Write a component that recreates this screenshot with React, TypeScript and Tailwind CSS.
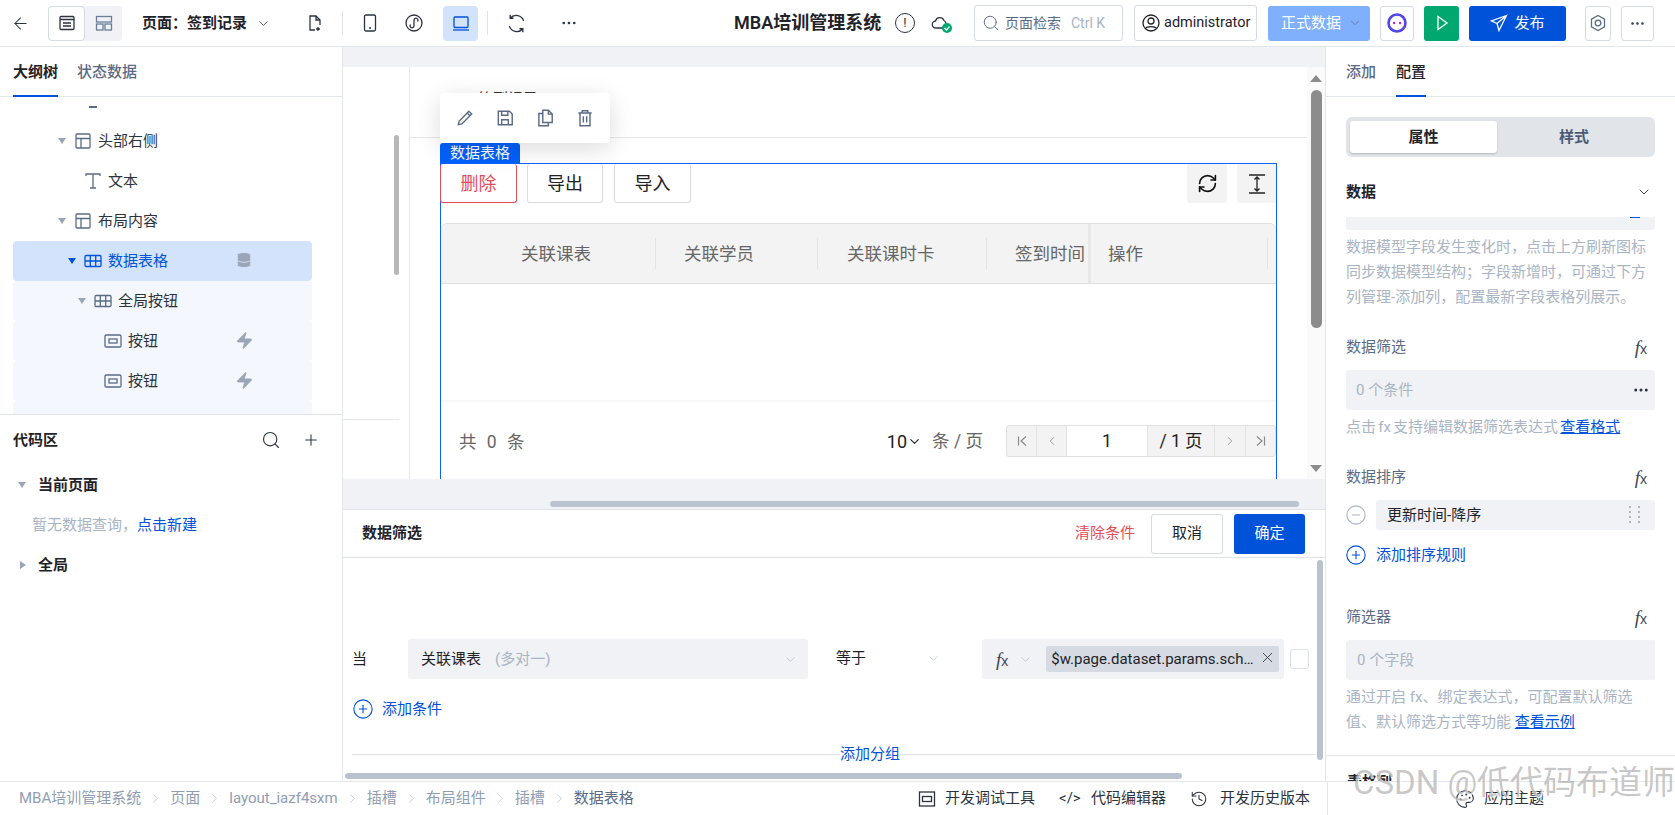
import {
  ArrowLeft,
  ChevronDown,
  ChevronRight,
  ChevronLeft,
  CircleMinus,
  CirclePlus,
  Ellipsis,
  Database,
  History,
  Palette,
  Plus,
  Search,
  X,
  Zap,
  RefreshCw,
} from "lucide-react";

const FONT = "font-['Roboto','Noto_Sans_CJK_SC',sans-serif]";

const Svg = ({ children, size = 18, className = "" }: { children: React.ReactNode; size?: number; className?: string }) => (
  <svg width={size} height={size} viewBox="0 0 18 18" fill="none" stroke="currentColor" strokeWidth="1.3" className={className}>
    {children}
  </svg>
);

const Fx = () => (
  <span className="font-['Liberation_Serif',serif] italic text-[19px] leading-none text-[#3c4657]">
    f<span className="text-[14px] not-italic font-['Liberation_Sans',sans-serif]">x</span>
  </span>
);

const Caret = ({ blue = false }: { blue?: boolean }) => (
  <span className={`w-0 h-0 border-x-[4px] border-x-transparent border-t-[6px] ${blue ? "border-t-[#0052d9]" : "border-t-[#9aa6b8]"}`} />
);

const LayoutIcon = () => (
  <Svg className="text-[#5b6b85]">
    <rect x="2" y="2" width="14" height="14" rx="1" />
    <path d="M2 6.5h14M7 6.5V16" />
  </Svg>
);

const TableIcon = ({ blue = false }: { blue?: boolean }) => (
  <Svg className={blue ? "text-[#0052d9]" : "text-[#5b6b85]"}>
    <rect x="1" y="3.5" width="16" height="11" rx="1.2" />
    <path d="M1 9h16M6.3 3.5v11M11.7 3.5v11" />
  </Svg>
);

const ButtonIcon = () => (
  <Svg className="text-[#5b6b85]">
    <rect x="1" y="3" width="16" height="12" rx="1.2" />
    <rect x="5" y="7" width="8" height="4" />
  </Svg>
);

type TreeRowProps = {
  pad: string;
  caret?: boolean;
  blue?: boolean;
  bg?: string;
  icon: React.ReactNode;
  label: string;
  side?: React.ReactNode;
};

const TreeRow = ({ pad, caret, blue, bg = "", icon, label, side }: TreeRowProps) => (
  <div className={`flex items-center h-10 shrink-0 rounded-[4px] relative ${pad} ${bg}`}>
    {caret && (
      <span className="w-[16px] flex items-center">
        <Caret blue={blue} />
      </span>
    )}
    {icon}
    <span className={`ml-[6px] text-[15px] ${blue ? "text-[#0052d9]" : "text-[#2b3340]"}`}>{label}</span>
    {side && <span className="absolute left-[222px] top-[10px]">{side}</span>}
  </div>
);

const Bolt = () => <Zap size={19} fill="#9aa6b8" stroke="#9aa6b8" strokeWidth={1} />;

const LeftPanel = () => (
  <aside className="w-[343px] shrink-0 border-r border-[#e3e6eb] flex flex-col">
    <div className="h-[50px] shrink-0 border-b border-[#e3e6eb] flex items-stretch pl-[13px] text-[15px]">
      <div className="w-[45px] pt-[2px] flex items-center font-semibold text-[#1f2329] border-b-2 border-[#0052d9] -mb-px">大纲树</div>
      <div className="ml-[19px] pt-[2px] flex items-center font-medium text-[#5b6b85]">状态数据</div>
    </div>
    <div className="h-[317px] shrink-0 overflow-hidden pl-[13px] pr-[30px] flex flex-col">
      <div className="h-[24px] shrink-0 pl-[76px] pt-[9px]">
        <div className="w-[8px] h-[2px] bg-[#5b6b85]" />
      </div>
      <TreeRow pad="pl-[45px]" caret icon={<LayoutIcon />} label="头部右侧" />
      <TreeRow
        pad="pl-[71px]"
        icon={
          <svg width="18" height="18" viewBox="0 0 18 18" fill="none" stroke="#5b6b85" strokeWidth="1.3">
            <path d="M2 4V2h14v2M9 2v14M6 16h6" />
          </svg>
        }
        label="文本"
      />
      <TreeRow pad="pl-[45px]" caret icon={<LayoutIcon />} label="布局内容" />
      <TreeRow
        pad="pl-[55px]"
        caret
        blue
        bg="bg-[#d2e3fb]"
        icon={<TableIcon blue />}
        label="数据表格"
        side={<Database size={18} fill="#9aa6b8" stroke="#d2e3fb" strokeWidth={1.2} />}
      />
      <TreeRow pad="pl-[65px]" caret bg="bg-[#f4f7fe]" icon={<TableIcon />} label="全局按钮" />
      <TreeRow pad="pl-[91px]" bg="bg-[#f4f7fe]" icon={<ButtonIcon />} label="按钮" side={<Bolt />} />
      <TreeRow pad="pl-[91px]" bg="bg-[#f4f7fe]" icon={<ButtonIcon />} label="按钮" side={<Bolt />} />
      <div className="h-10 shrink-0 bg-[#f4f7fe] rounded-[4px]" />
    </div>
    <div className="border-t border-[#dfe3e9] flex-1">
      <div className="h-[50px] flex items-center pl-[13px] pr-[22px]">
        <span className="text-[15px] font-semibold text-[#1f2329]">代码区</span>
        <Search size={20} strokeWidth={1.4} className="ml-auto text-[#2b3340]" />
        <Plus size={18} strokeWidth={1.4} className="ml-[21px] text-[#2b3340]" />
      </div>
      <div className="h-[40px] flex items-center pl-[18px] text-[15px] font-semibold text-[#1f2329]">
        <span className="w-[20px] flex"><Caret /></span>
        当前页面
      </div>
      <div className="h-[40px] flex items-center pl-[32px] text-[15px] text-[#a9b4c4]">
        暂无数据查询，<span className="text-[#0052d9]">点击新建</span>
      </div>
      <div className="h-[40px] flex items-center pl-[20px] text-[15px] font-semibold text-[#1f2329]">
        <span className="w-[18px] flex">
          <span className="w-0 h-0 border-y-[4px] border-y-transparent border-l-[6px] border-l-[#9aa6b8]" />
        </span>
        全局
      </div>
    </div>
  </aside>
);

const TH = ({ width, pad, label, divider = true, extra = "" }: { width: string; pad: string; label: string; divider?: boolean; extra?: string }) => (
  <div className={`flex items-center justify-between ${width} ${pad} ${extra}`}>
    <span className="mt-[2px]">{label}</span>
    {divider && <span className="w-px h-[31px] bg-[#e3e3e3]" />}
  </div>
);

const PageCell = ({ children, width, white = false }: { children: React.ReactNode; width: string; white?: boolean }) => (
  <div className={`flex items-center justify-center h-full border-r border-[#e3e3e3] last:border-r-0 ${width} ${white ? "bg-white" : ""}`}>
    {children}
  </div>
);

const Canvas = () => (
  <div className="h-[462px] shrink-0 bg-[#f0f2f5] relative">
    <div className="h-[20px]" />
    <div className="h-[412px] bg-white flex overflow-hidden">
      <div className="w-[67px] shrink-0 border-r border-[#e3e6eb] relative">
        <div className="absolute left-[51px] top-[68px] w-[5px] h-[140px] rounded-full bg-[#b8b8b8]" />
        <div className="absolute left-0 top-[352px] w-[56px] h-px bg-[#e3e6eb]" />
      </div>
      <div className="w-[897px] shrink-0 relative overflow-hidden">
        <div className="h-[71px] border-b border-[#e6e6e6] pl-[68px] pt-[21px] text-[15px] text-[#333]">签到记录</div>
        <div className="ml-[30px] mt-[5px] w-[80px] h-[20px] rounded-t-[3px] bg-[#0061fb] text-white text-[15px] flex items-center justify-center">数据表格</div>
        <div className="ml-[30px] w-[837px] h-[316px] border-x border-t border-[#0f62fe] flex flex-col">
          <div className="h-[39px] shrink-0 flex text-[18px] text-[#222]">
            <div className="-ml-px w-[77px] pt-[1px] border border-t-0 border-[#e34d59] rounded-[3px] flex items-center justify-center text-[#e34d59]">删除</div>
            <div className="ml-[10px] w-[76px] pt-[1px] border border-t-0 border-[#dcdcdc] rounded-[3px] flex items-center justify-center">导出</div>
            <div className="ml-[11px] w-[77px] pt-[1px] border border-t-0 border-[#dcdcdc] rounded-[3px] flex items-center justify-center">导入</div>
            <div className="ml-auto w-[40px] bg-[#f3f3f3] rounded-[3px] flex items-center justify-center">
              <RefreshCw size={21} strokeWidth={1.9} className="text-[#111]" />
            </div>
            <div className="ml-[10px] w-[39px] bg-[#f3f3f3] rounded-[3px] flex items-center justify-center">
              <svg width="20" height="22" viewBox="0 0 20 22" fill="none" stroke="#222" strokeWidth="1.3">
                <path d="M2 2h16M2 20h16M10 4v14M7.5 6.5 10 4l2.5 2.5M7.5 15.5 10 18l2.5-2.5" />
              </svg>
            </div>
          </div>
          <div className="mt-[20px] h-[61px] shrink-0 bg-[#f3f3f3] border-y border-[#e0e0e0] rounded-t-[6px] flex text-[17.5px] text-[#666]">
            <TH width="w-[215px]" pad="pl-[80px]" label="关联课表" />
            <TH width="w-[162px]" pad="pl-[28px]" label="关联学员" />
            <TH width="w-[169px]" pad="pl-[29px]" label="关联课时卡" />
            <TH width="w-[101px]" pad="pl-[28px]" label="签到时间" divider={false} />
            <TH width="flex-1" pad="pl-[17px] pr-[8px]" label="操作" extra="border-l-[3px] border-[#e8e8e8]" />
          </div>
          <div className="h-[116px] shrink-0" />
          <div className="h-[2px] shrink-0 bg-[#f7f7f7]" />
          <div className="flex-1 flex items-center pl-[18px] pt-[1px]">
            <span className="text-[17.5px] text-[#666] tracking-[3px] mt-[3px]">共 0 条</span>
            <span className="ml-auto text-[18px] text-[#222] flex items-center">
              10
              <ChevronDown size={15} strokeWidth={1.8} className="text-[#222]" />
            </span>
            <span className="ml-[10px] text-[17.5px] text-[#666]">条 / 页</span>
            <div className="ml-[23px] w-[270px] h-[32px] bg-[#f3f3f3] border border-[#e0e0e0] rounded-[3px] flex items-center text-[#8a8a8a]">
              <PageCell width="w-[30px]">
                <svg width="14" height="14" viewBox="0 0 14 14" fill="none" stroke="currentColor" strokeWidth="1.2"><path d="M3.5 2.5v9M11 2.5 6 7l5 4.5" /></svg>
              </PageCell>
              <PageCell width="w-[30px]"><ChevronLeft size={14} strokeWidth={1.4} /></PageCell>
              <PageCell width="w-[81px]" white><span className="text-[17.5px] text-[#222]">1</span></PageCell>
              <PageCell width="w-[67px]"><span className="text-[17.5px] text-[#222]">/ 1 页</span></PageCell>
              <PageCell width="w-[31px]"><ChevronRight size={14} strokeWidth={1.4} /></PageCell>
              <PageCell width="w-[29px]">
                <svg width="14" height="14" viewBox="0 0 14 14" fill="none" stroke="currentColor" strokeWidth="1.2"><path d="M10.5 2.5v9M3 2.5 8 7l-5 4.5" /></svg>
              </PageCell>
            </div>
          </div>
        </div>
        <div className="absolute left-[30px] top-[26px] w-[170px] h-[50px] bg-white rounded-[4px] shadow-[0_6px_24px_rgba(0,0,0,0.14)] flex items-center pl-[15px] gap-[20px] text-[#5b6b85]">
          <Svg size={20}><path d="m3 15 .8-3.2L12.5 3l2.5 2.5-8.8 8.8L3 15ZM11 4.5 13.5 7" /></Svg>
          <Svg size={20}><path d="M3 3h10l2.5 2.5V15H3V3ZM6 3v3.5h5.5V3M6 15v-4.5h6V15" /></Svg>
          <Svg size={20}><path d="M7 2h5l3.5 3.5V13H7V2ZM12 2v3.5h3.5M7 5H3.5v11H12v-3" /></Svg>
          <Svg size={20}><path d="M3 4.5h12M6.5 4.5V2.5h5v2M4.5 4.5V16h9V4.5M7.5 7.5v5.5M10.5 7.5v5.5" /></Svg>
        </div>
      </div>
      <div className="flex-1 bg-[#fafafa] relative">
        <div className="absolute left-[3px] top-[8px] w-0 h-0 border-x-[6px] border-x-transparent border-b-[7px] border-b-[#8c8c8c]" />
        <div className="absolute left-[4px] top-[23px] w-[11px] h-[238px] rounded-full bg-[#8c8c8c]" />
        <div className="absolute left-[3px] top-[398px] w-0 h-0 border-x-[6px] border-x-transparent border-t-[7px] border-t-[#8c8c8c]" />
      </div>
    </div>
    <div className="absolute left-[207px] top-[454px] w-[749px] h-[6px] rounded-full bg-[#b9c3d0]" />
  </div>
);

const BottomPanel = () => (
  <div className="h-[272px] shrink-0 border-t border-[#dfe3e9] flex flex-col">
    <div className="h-[48px] shrink-0 border-b border-[#dfe3e9] flex items-center pl-[19px] pr-[20px] text-[15px]">
      <span className="font-semibold text-[#1f2329]">数据筛选</span>
      <span className="ml-auto text-[#e34d59]">清除条件</span>
      <div className="ml-[16px] w-[72px] h-[40px] border border-[#d5dae3] rounded-[3px] flex items-center justify-center text-[#1f2329]">取消</div>
      <div className="ml-[11px] w-[71px] h-[40px] bg-[#0052d9] rounded-[3px] flex items-center justify-center text-white">确定</div>
    </div>
    <div className="flex-1 relative overflow-hidden pl-[9px] pt-[81px]">
      <div className="flex items-center text-[15px] text-[#1f2329]">
        <span className="w-[56px]">当</span>
        <div className="w-[400px] h-[40px] bg-[#f0f2f5] rounded-[3px] flex items-center pl-[13px] pr-[10px]">
          关联课表
          <span className="ml-[14px] text-[#a9b4c4]">(多对一)</span>
          <ChevronDown size={15} strokeWidth={1.2} className="ml-auto text-[#b6bfcc]" />
        </div>
        <div className="w-[174px] flex items-center pl-[28px] -mt-[2px]">
          等于
          <ChevronDown size={15} strokeWidth={1.2} className="ml-[60px] text-[#b6bfcc]" />
        </div>
        <div className="w-[302px] h-[40px] bg-[#f0f2f5] rounded-[3px] flex items-center pl-[14px]">
          <Fx />
          <ChevronDown size={15} strokeWidth={1.2} className="ml-[10px] text-[#b6bfcc]" />
          <div className="ml-[13px] w-[233px] h-[26px] bg-[#d5dae3] rounded-[2px] flex items-center pl-[5px] text-[#1f2329]">
            <span className="w-[203px] truncate">$w.page.dataset.params.sch...</span>
            <X size={17} strokeWidth={1.2} className="ml-[5px] -mt-[3px] text-[#2b3340]" />
          </div>
        </div>
        <div className="ml-[6px] w-[19px] h-[20px] border border-[#dcdfe6] rounded-[3px]" />
      </div>
      <div className="mt-[20px] h-[20px] flex items-center text-[15px] text-[#0052d9]">
        <CirclePlus size={22} strokeWidth={1.2} />
        <span className="ml-[8px]">添加条件</span>
      </div>
      <div className="mt-[25px] h-[20px] flex items-center pr-[10px] text-[15px] text-[#0052d9]">
        <div className="w-[488px] h-px bg-[#dfe3e9]" />
        <span>添加分组</span>
        <div className="flex-1 h-px bg-[#dfe3e9]" />
      </div>
      <div className="absolute right-[2px] top-[2px] w-[6px] h-[200px] rounded-full bg-[#b9c3d0]" />
      <div className="absolute left-[2px] bottom-[2px] w-[837px] h-[6px] rounded-full bg-[#b9c3d0]" />
    </div>
  </div>
);

const Help = ({ children }: { children: React.ReactNode }) => (
  <div className="mt-[5px] text-[15px] leading-[25px] text-[#a9b4c4]">{children}</div>
);

const FieldLabel = ({ label, mt }: { label: string; mt: string }) => (
  <div className={`h-[20px] flex items-center justify-between pr-[8px] text-[15px] text-[#5b6b85] ${mt}`}>
    {label}
    <Fx />
  </div>
);

const RightPanel = () => (
  <aside className="w-[350px] shrink-0 border-l border-[#e3e6eb] overflow-hidden flex flex-col">
    <div className="h-[50px] shrink-0 border-b border-[#e3e6eb] flex items-stretch pl-[20px] text-[15px]">
      <div className="pt-[2px] flex items-center font-medium text-[#5b6b85]">添加</div>
      <div className="ml-[20px] pt-[2px] flex items-center font-medium text-[#1f2329] border-b-2 border-[#0052d9] -mb-px">配置</div>
    </div>
    <div className="px-[20px] flex-1">
      <div className="mt-[20px] w-[309px] h-[40px] rounded-[6px] bg-[#e1e4e9] p-[4px] flex text-[15px] font-semibold">
        <div className="w-[147px] bg-white rounded-[3px] shadow-[0_1px_2px_rgba(0,0,0,0.2)] flex items-center justify-center text-[#1f2329]">属性</div>
        <div className="flex-1 flex items-center justify-center text-[#4b5b76]">样式</div>
      </div>
      <div className="mt-[24px] w-[309px] h-[22px] flex items-center justify-between pr-[3px] text-[15px] font-semibold text-[#1f2329]">
        数据
        <ChevronDown size={16} strokeWidth={1.3} />
      </div>
      <div className="mt-[14px] w-[309px] h-[13px] bg-[#f0f2f5] rounded-b-[3px] flex justify-end pr-[15px]">
        <div className="w-[10px] h-px bg-[#0052d9]" />
      </div>
      <Help>
        数据模型字段发生变化时，点击上方刷新图标
        <br />
        同步数据模型结构；字段新增时，可通过下方
        <br />
        列管理-添加列，配置最新字段表格列展示。
      </Help>
      <FieldLabel label="数据筛选" mt="mt-[27px]" />
      <div className="mt-[13px] w-[309px] h-[40px] bg-[#f0f2f5] rounded-[3px] flex items-center pl-[10px] pr-[5px] text-[15px] text-[#a9b4c4]">
        0 个条件
        <Ellipsis size={18} className="ml-auto text-[#2b3340]" />
      </div>
      <Help>
        <span className="[word-spacing:-1.5px]">点击 fx 支持编辑数据筛选表达式 </span>
        <span className="text-[#0052d9] underline">查看格式</span>
      </Help>
      <FieldLabel label="数据排序" mt="mt-[27px]" />
      <div className="mt-[13px] h-[30px] flex items-center">
        <CircleMinus size={22} strokeWidth={1.2} className="text-[#a9b4c4] -ml-[1px]" />
        <div className="ml-[9px] w-[279px] h-[30px] bg-[#f0f2f5] rounded-[3px] flex items-center pl-[11px] pr-[14px] text-[15px] text-[#1f2329]">
          更新时间-降序
          <svg width="13" height="18" viewBox="0 0 13 18" className="ml-auto" stroke="#6b7a90" strokeWidth="1" strokeDasharray="2 3">
            <path d="M2 0v18M11 0v18" />
          </svg>
        </div>
      </div>
      <div className="mt-[15px] h-[20px] flex items-center text-[15px] text-[#0052d9]">
        <CirclePlus size={22} strokeWidth={1.2} className="-ml-[1px]" />
        <span className="ml-[9px]">添加排序规则</span>
      </div>
      <FieldLabel label="筛选器" mt="mt-[42px]" />
      <div className="mt-[13px] w-[309px] h-[40px] bg-[#f0f2f5] rounded-[3px] flex items-center pl-[11px] text-[15px] text-[#a9b4c4]">0 个字段</div>
      <Help>
        通过开启 fx、绑定表达式，可配置默认筛选
        <br />
        值、默认筛选方式等功能 <span className="text-[#0052d9] underline">查看示例</span>
      </Help>
      <div className="mt-[20px] -mx-[20px] border-t border-[#e3e6eb] pl-[21px] pt-[15px] text-[15px] font-semibold text-[#1f2329]">表格列</div>
    </div>
  </aside>
);

const Crumb = ({ label, last = false }: { label: string; last?: boolean }) => (
  <>
    <span className={last ? "text-[#5b6b85]" : "text-[#8f9db2]"}>{label}</span>
    {!last && <ChevronRight size={15} strokeWidth={1} className="mx-[7px] text-[#a9b4c4]" />}
  </>
);

const Footer = () => (
  <footer className="h-[34px] shrink-0 border-t border-[#e3e6eb] flex items-center pl-[19px] text-[15px]">
    <div className="w-[899px] flex items-center">
      <Crumb label="MBA培训管理系统" />
      <Crumb label="页面" />
      <Crumb label="layout_iazf4sxm" />
      <Crumb label="插槽" />
      <Crumb label="布局组件" />
      <Crumb label="插槽" />
      <Crumb label="数据表格" last />
    </div>
    <div className="flex items-center text-[#2b3340]">
      <Svg size={18}><rect x="1.5" y="2" width="15" height="14" /><rect x="4.5" y="6.5" width="9" height="5" /></Svg>
      <span className="ml-[9px]">开发调试工具</span>
      <span className="ml-[24px] text-[15px] w-[26px]">&lt;/&gt;</span>
      <span className="ml-[6px]">代码编辑器</span>
      <History size={18} strokeWidth={1.4} className="ml-[24px]" />
      <span className="ml-[12px]">开发历史版本</span>
    </div>
    <div className="ml-[17px] h-full border-l border-[#e3e6eb] flex items-center pl-[127px] text-[#2b3340]">
      <Palette size={20} strokeWidth={1.3} />
      <span className="ml-[9px]">应用主题</span>
    </div>
  </footer>
);

const Header = () => (
  <header className="h-[47px] shrink-0 border-b border-[#e3e6eb] flex items-center">
    <div className="w-[734px] shrink-0 flex items-center">
      <ArrowLeft size={19} strokeWidth={1.3} className="ml-[11px] text-[#2b3340]" />
      <div className="ml-[18px] w-[74px] h-[35px] bg-[#f0f2f5] rounded-[4px] flex">
        <div className="w-[37px] bg-white border border-[#d5dae3] rounded-[4px] flex items-center justify-center text-[#2b3340]">
          <Svg><rect x="2" y="2.5" width="14" height="13" rx="1" /><path d="M2 5.5h14M5 9h8M5 12h8" /></Svg>
        </div>
        <div className="flex-1 flex items-center justify-center text-[#6b7d99]">
          <Svg><rect x="1.5" y="2.5" width="15" height="5.5" /><rect x="1.5" y="10" width="6.5" height="6" /><rect x="10" y="10" width="6.5" height="6" /></Svg>
        </div>
      </div>
      <span className="ml-[20px] text-[15px] font-semibold text-[#1f2329]">页面：签到记录</span>
      <ChevronDown size={15} strokeWidth={1.3} className="ml-[9px] text-[#2b3340]" />
      <span className="ml-[35px] text-[#2b3340]">
        <Svg><path d="M9 16H4V2h6l4 4v5M10 2v4h4M12 13v4M10 15h4" /></Svg>
      </span>
      <div className="ml-[18px] w-px h-[24px] bg-[#dfe3e9]" />
      <span className="ml-[18px] text-[#2b3340]">
        <Svg><rect x="3.5" y="1" width="11" height="16" rx="1.5" /><path d="M8 14h2" /></Svg>
      </span>
      <span className="ml-[26px] text-[#2b3340]">
        <Svg><circle cx="9" cy="9" r="8" /><path d="M5.5 10.5a2 2 0 1 0 3.5 1V6.5a2 2 0 1 1 3.5 1" /></Svg>
      </span>
      <div className="ml-[20px] w-[35px] h-[35px] bg-[#d2e3fb] rounded-[4px] flex items-center justify-center text-[#0052d9]">
        <Svg><rect x="2" y="3" width="14" height="10.5" rx="1" /><path d="M1 16h16" /></Svg>
      </div>
      <div className="ml-[9px] w-px h-[24px] bg-[#dfe3e9]" />
      <span className="ml-[19px] text-[#2b3340]">
        <Svg size={19}><path d="M15.8 6.5A7.5 7.5 0 0 0 3 4M2.2 11.5A7.5 7.5 0 0 0 15 14M3 .8V4h3.2M15 17.2V14h-3.2" /></Svg>
      </span>
      <Ellipsis size={18} strokeWidth={1.6} className="ml-[34px] text-[#2b3340]" />
    </div>
    <span className="w-[146px] shrink-0 text-[18px] leading-none font-semibold text-[#1f2329] whitespace-nowrap">MBA培训管理系统</span>
    <span className="ml-[15px] w-[20px] h-[20px] rounded-full border border-[#2b3340] flex items-center justify-center text-[13px] text-[#2b3340]">!</span>
    <span className="ml-[16px] relative text-[#2b3340]">
      <Svg><path d="M12 14H5a3.5 3.5 0 0 1-.5-7A4.5 4.5 0 0 1 13 6.5 3.5 3.5 0 0 1 14 12" /></Svg>
      <span className="absolute right-[-3px] bottom-[-1px] w-[10px] h-[10px] rounded-full bg-[#00a870] flex items-center justify-center">
        <svg width="8" height="8" viewBox="0 0 8 8" fill="none" stroke="#fff" strokeWidth="1.2"><path d="m1.5 4 2 2 3-3.5" /></svg>
      </span>
    </span>
    <div className="ml-[25px] w-[149px] h-[36px] border border-[#d5dae3] rounded-[3px] flex items-center pl-[7px] text-[14px]">
      <Search size={18} strokeWidth={1.3} className="text-[#5b6b85]" />
      <span className="ml-[5px] text-[#5b6b85]">页面检索</span>
      <span className="ml-[10px] text-[#a9b4c4]">Ctrl K</span>
    </div>
    <div className="ml-[11px] w-[123px] h-[36px] border border-[#d5dae3] rounded-[3px] flex items-center pl-[7px] text-[14.5px] text-[#1f2329]">
      <Svg><circle cx="9" cy="9" r="8" /><circle cx="9" cy="7" r="3" /><path d="M3.5 14.5C5 12 13 12 14.5 14.5" /></Svg>
      <span className="ml-[4px]">administrator</span>
    </div>
    <div className="ml-[11px] w-[102px] h-[35px] bg-[#80b0fc] rounded-[3px] flex items-center pl-[13px] text-[15px] text-white">
      正式数据
      <ChevronDown size={14} strokeWidth={1.2} className="ml-[7px] text-[#5b6b85]" />
    </div>
    <div className="ml-[10px] w-[34px] h-[35px] border border-[#d5dae3] rounded-[3px] flex items-center justify-center">
      <svg width="22" height="22" viewBox="0 0 22 22">
        <circle cx="11" cy="11" r="8.5" fill="none" stroke="#4f46e5" strokeWidth="2.6" />
        <circle cx="8" cy="11" r="1.2" fill="#c026d3" />
        <circle cx="14" cy="11" r="1.2" fill="#c026d3" />
      </svg>
    </div>
    <div className="ml-[10px] w-[35px] h-[35px] bg-[#00a870] rounded-[3px] flex items-center justify-center text-white">
      <Svg><path d="M5 2.5 14 9l-9 6.5v-13Z" /></Svg>
    </div>
    <div className="ml-[10px] w-[97px] h-[35px] bg-[#0052d9] rounded-[3px] flex items-center justify-center text-[15px] text-white">
      <Svg><path d="M16.5 1.5 1.5 7l5.5 2.5 2 7 7.5-15ZM7 9.5l9.5-8" /></Svg>
      <span className="ml-[6px]">发布</span>
    </div>
    <div className="ml-[19px] w-[26px] h-[35px] border border-[#d5dae3] rounded-[3px] flex items-center justify-center text-[#5b6b85]">
      <Svg><path d="M9 1.5 15.5 5.2v7.6L9 16.5l-6.5-3.7V5.2L9 1.5Z" /><circle cx="9" cy="9" r="2.8" /></Svg>
    </div>
    <div className="ml-[10px] w-[33px] h-[35px] border border-[#d5dae3] rounded-[3px] flex items-center justify-center text-[#2b3340]">
      <Ellipsis size={17} strokeWidth={1.6} />
    </div>
  </header>
);

const App = () => (
  <div className={`relative w-[1675px] h-[815px] overflow-hidden bg-white flex flex-col ${FONT}`}>
    <Header />
    <div className="h-[734px] shrink-0 flex overflow-hidden">
      <LeftPanel />
      <main className="w-[982px] shrink-0 flex flex-col">
        <Canvas />
        <BottomPanel />
      </main>
      <RightPanel />
    </div>
    <Footer />
    <div className="absolute left-[1353px] top-[763px] text-[33px] leading-[40px] whitespace-nowrap text-[rgba(120,120,120,0.42)] [text-shadow:1px_1px_0_rgba(255,255,255,0.8)]">
      CSDN @低代码布道师
    </div>
  </div>
);

export default App;
